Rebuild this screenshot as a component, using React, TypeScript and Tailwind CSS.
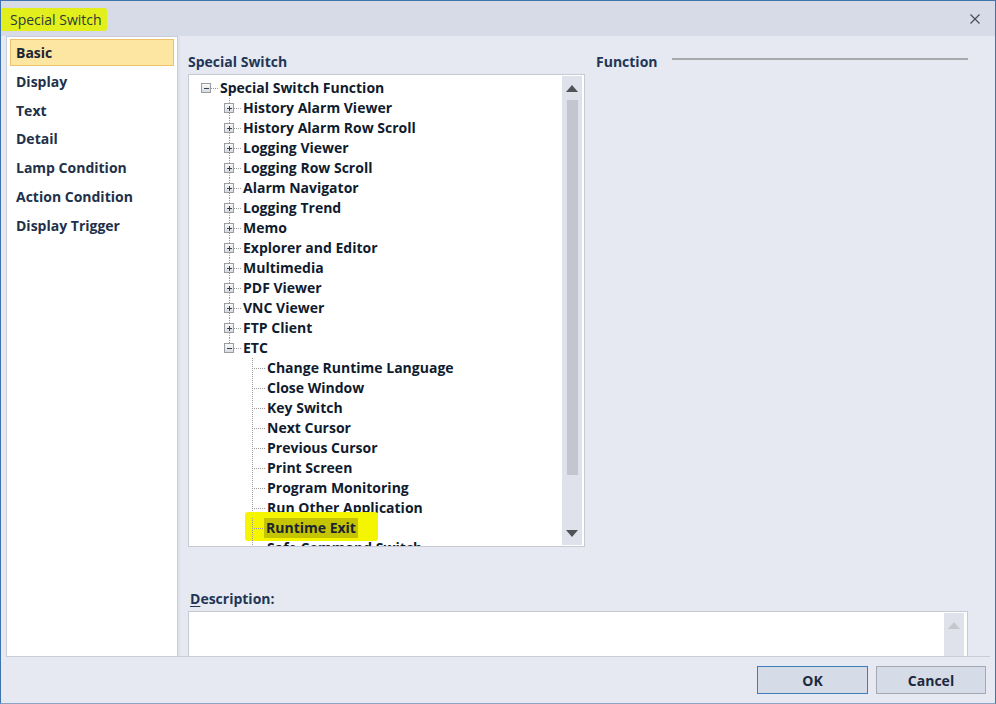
import React from "react";

type Row = {
  label: string;
  level: 0 | 1 | 2;
  kind: "root" | "plus" | "minus" | "leaf";
  last?: boolean;
  selected?: boolean;
};

const rows: Row[] = [
  { label: "Special Switch Function", level: 0, kind: "root" },
  { label: "History Alarm Viewer", level: 1, kind: "plus" },
  { label: "History Alarm Row Scroll", level: 1, kind: "plus" },
  { label: "Logging Viewer", level: 1, kind: "plus" },
  { label: "Logging Row Scroll", level: 1, kind: "plus" },
  { label: "Alarm Navigator", level: 1, kind: "plus" },
  { label: "Logging Trend", level: 1, kind: "plus" },
  { label: "Memo", level: 1, kind: "plus" },
  { label: "Explorer and Editor", level: 1, kind: "plus" },
  { label: "Multimedia", level: 1, kind: "plus" },
  { label: "PDF Viewer", level: 1, kind: "plus" },
  { label: "VNC Viewer", level: 1, kind: "plus" },
  { label: "FTP Client", level: 1, kind: "plus" },
  { label: "ETC", level: 1, kind: "minus", last: true },
  { label: "Change Runtime Language", level: 2, kind: "leaf" },
  { label: "Close Window", level: 2, kind: "leaf" },
  { label: "Key Switch", level: 2, kind: "leaf" },
  { label: "Next Cursor", level: 2, kind: "leaf" },
  { label: "Previous Cursor", level: 2, kind: "leaf" },
  { label: "Print Screen", level: 2, kind: "leaf" },
  { label: "Program Monitoring", level: 2, kind: "leaf" },
  { label: "Run Other Application", level: 2, kind: "leaf" },
  { label: "Runtime Exit", level: 2, kind: "leaf", selected: true },
  { label: "Safe Command Switch", level: 2, kind: "leaf" },
];

const navItems = [
  "Basic",
  "Display",
  "Text",
  "Detail",
  "Lamp Condition",
  "Action Condition",
  "Display Trigger",
];

const DOT = "#9c9c9c";

function ExpBox({ x, minus }: { x: number; minus?: boolean }) {
  return (
    <g>
      <defs>
        <linearGradient id="bx" x1="0" y1="0" x2="0" y2="1">
          <stop offset="0" stopColor="#fbfbfb" />
          <stop offset="1" stopColor="#d6d9de" />
        </linearGradient>
      </defs>
      <rect x={x + 0.5} y={5.5} width={9} height={9} fill="url(#bx)" stroke="#9a9ca0" shapeRendering="crispEdges" />
      <line x1={x + 3} y1={10.5} x2={x + 8} y2={10.5} stroke="#34405a" shapeRendering="crispEdges" />
      {!minus && (
        <line x1={x + 5.5} y1={8} x2={x + 5.5} y2={13} stroke="#34405a" shapeRendering="crispEdges" />
      )}
    </g>
  );
}

function Connector({ row }: { row: Row }) {
  if (row.level === 0) {
    return (
      <svg width={31} height={20} className="shrink-0">
        <ExpBox x={12} minus />
        <line x1={22} y1={10.5} x2={29} y2={10.5} stroke={DOT} strokeDasharray="1 1" shapeRendering="crispEdges" />
      </svg>
    );
  }
  if (row.level === 1) {
    return (
      <svg width={54} height={20} className="shrink-0">
        <line x1={40.5} y1={0} x2={40.5} y2={5} stroke={DOT} strokeDasharray="1 1" shapeRendering="crispEdges" />
        {!row.last && (
          <line x1={40.5} y1={15} x2={40.5} y2={20} stroke={DOT} strokeDasharray="1 1" shapeRendering="crispEdges" />
        )}
        <ExpBox x={35} minus={row.kind === "minus"} />
        <line x1={45} y1={10.5} x2={53} y2={10.5} stroke={DOT} strokeDasharray="1 1" shapeRendering="crispEdges" />
      </svg>
    );
  }
  return (
    <svg width={78} height={20} className="shrink-0">
      <line x1={63.5} y1={0} x2={63.5} y2={20} stroke={DOT} strokeDasharray="1 1" shapeRendering="crispEdges" />
      <line x1={65} y1={10.5} x2={76} y2={10.5} stroke={DOT} strokeDasharray="1 1" shapeRendering="crispEdges" />
    </svg>
  );
}

function TreeRow({ row }: { row: Row }) {
  return (
    <div className="relative flex h-[20px] items-center">
      {row.selected && (
        <div className="absolute left-[56px] top-[-6px] h-[29px] w-[133px] rounded-[3px] bg-[#f5f500]" />
      )}
      <div className="relative flex h-[20px] items-center">
        <Connector row={row} />
        <span
          className={
            row.selected
              ? "ml-[-3px] whitespace-nowrap bg-[#c4c400] px-[2px] py-[1px] leading-[18px] text-[#1a2333]"
              : "whitespace-nowrap leading-[20px] text-[#101b2e]"
          }
        >
          {row.label}
        </span>
      </div>
    </div>
  );
}

function Triangle({ up, color }: { up?: boolean; color: string }) {
  return (
    <svg width={12} height={7} viewBox="0 0 12 7">
      {up ? <path d="M0 7 L6 0 L12 7 Z" fill={color} /> : <path d="M0 0 L6 7 L12 0 Z" fill={color} />}
    </svg>
  );
}

export default function App() {
  return (
    <div className="flex h-[704px] w-[996px] flex-col overflow-hidden border border-[#3f73ad] border-b-[#8aa4c4] bg-[#e6e9f2] font-['Open_Sans',sans-serif] text-[14px]">
      {/* Title bar */}
      <div className="flex h-[35px] shrink-0 items-center justify-between bg-[#d6dbe7]">
        <div className="ml-[-1px] mt-[1px] flex h-[23px] items-center rounded-r-[3px] bg-[#e3ef1c] pl-[10px] pr-[5px] text-[14px] text-[#2b3a3a]">
          Special Switch
        </div>
        <svg width={10} height={10} className="mr-[15px]" viewBox="0 0 10 10">
          <path d="M0.5 0.5 L9.5 9.5 M9.5 0.5 L0.5 9.5" stroke="#4a4d55" strokeWidth={1.2} />
        </svg>
      </div>

      {/* Body */}
      <div className="mx-[5px] flex h-[621px] shrink-0 border-b border-[#c9cdd7]">
        {/* Left nav */}
        <div className="w-[172px] shrink-0 border border-b-0 border-[#c9cdd7] bg-white pt-[1px] font-bold text-[#22304a]">
          {navItems.map((n, i) =>
            i === 0 ? (
              <div key={n} className="mx-[3px] my-[1px] flex h-[27px] items-center border border-[#ecc36a] bg-[#fde6a2] pl-[5px] text-[#1c2535]">
                {n}
              </div>
            ) : (
              <div key={n} className="flex h-[28.8px] items-center pl-[9px]">
                {n}
              </div>
            )
          )}
        </div>
        <div className="w-[2px] shrink-0 bg-[#dfe2ea]" />

        {/* Right pane */}
        <div className="flex flex-1 flex-col pl-[8px] pr-[22px]">
          <div className="flex">
            {/* Tree column */}
            <div className="flex w-[397px] shrink-0 flex-col">
              <div className="mt-[17px] h-[18px] leading-[18px] font-bold text-[#1f3656]">Special Switch</div>
              <div className="mt-[3px] flex h-[473px] border border-[#c6cad4] bg-white">
                <div className="flex-1 overflow-hidden pt-[3px] font-bold">
                  {rows.map((r) => (
                    <TreeRow key={r.label} row={r} />
                  ))}
                </div>
                <div className="my-[1px] mr-[2px] flex w-[20px] flex-col items-center bg-[#dfe2eb]">
                  <div className="flex h-[24px] items-center justify-center">
                    <Triangle up color="#4f5257" />
                  </div>
                  <div className="h-[375px] w-[11px] bg-[#c3c6ce]" />
                  <div className="flex-1" />
                  <div className="flex h-[24px] items-center justify-center">
                    <Triangle color="#4f5257" />
                  </div>
                </div>
              </div>
            </div>

            {/* Function column */}
            <div className="ml-[11px] flex flex-1 items-start pt-[17px]">
              <div className="h-[18px] leading-[18px] font-bold text-[#1f3656]">Function</div>
              <div className="ml-[14px] mt-[5px] h-[2px] flex-1 bg-[#a9a9ab]" />
            </div>
          </div>

          <div className="mt-[43px] h-[18px] pl-[2px] leading-[18px] font-bold text-[#1f3656]">
            <span className="underline underline-offset-2">D</span>escription:
          </div>
          <div className="mt-[3px] flex flex-1 border border-b-0 border-[#c6cad4] bg-white">
            <div className="flex-1" />
            <div className="mt-[1px] mr-[3px] flex w-[20px] flex-col items-center bg-[#dfe2eb]">
              <div className="flex h-[24px] items-center justify-center">
                <Triangle up color="#c4c7ce" />
              </div>
            </div>
          </div>
        </div>
      </div>

      {/* Footer */}
      <div className="flex flex-1 items-start justify-end gap-[8px] pr-[9px] pt-[9px]">
        <button className="h-[28px] w-[111px] border border-[#3f7cba] bg-[#d6dbe8] font-bold text-[#1c2a40]">
          OK
        </button>
        <button className="h-[28px] w-[110px] border border-[#a4a8b1] bg-[#d6dbe8] font-bold text-[#1c2a40]">
          Cancel
        </button>
      </div>
    </div>
  );
}
